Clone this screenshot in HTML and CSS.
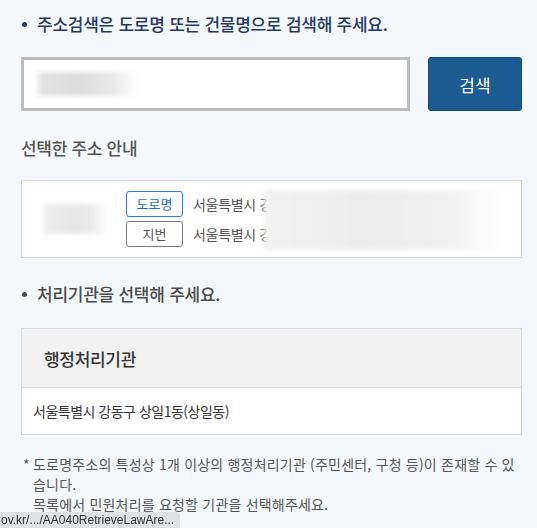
FILE: index.html
```html
<!DOCTYPE html>
<html lang="ko">
<head>
<meta charset="utf-8">
<title>주소검색</title>
<link rel="stylesheet" href="styles.css">
</head>
<body>
<div class="page">
  <p class="guide guide-blue">주소검색은 도로명 또는 건물명으로 검색해 주세요.</p>

  <div class="search-row">
    <div class="search-input"><span class="blur blur-input"></span></div>
    <button class="search-btn" type="button">검색</button>
  </div>

  <h3 class="section-title">선택한 주소 안내</h3>

  <div class="addr-box">
    <div class="addr-zip"><span class="blur blur-zip"></span></div>
    <div class="addr-lines">
      <div class="addr-line"><span class="badge badge-road">도로명</span><span class="addr-text">서울특별시 <span class="cut">강</span></span></div>
      <div class="addr-line"><span class="badge badge-jibun">지번</span><span class="addr-text">서울특별시 <span class="cut">강</span></span></div>
      <span class="blur blur-addr"></span>
    </div>
  </div>

  <p class="guide guide-gray">처리기관을 선택해 주세요.</p>

  <div class="org-table">
    <div class="org-head">행정처리기관</div>
    <div class="org-row">서울특별시 강동구 상일1동(상일동)</div>
  </div>

  <div class="note">
    <span class="note-star">*</span>
    <p class="note-text">도로명주소의 특성상 1개 이상의 행정처리기관 (주민센터, 구청 등)이 존재할 수 있습니다.<br>목록에서 민원처리를 요청할 기관을 선택해주세요.</p>
  </div>
</div>
<div class="status-bubble">ov.kr/.../AA040RetrieveLawAre...</div>
</body>
</html>
```

FILE: styles.css
```css
html, body {
  margin: 0;
  padding: 0;
  background: #f4f8fc;
  font-family: "Noto Sans CJK KR", "Noto Sans", sans-serif;
}

.page {
  padding: 13px 15px 0 21px;
  width: 501px;
}

.guide {
  position: relative;
  margin: 0;
  padding-left: 16px;
  font-size: 17px;
  line-height: 22px;
  font-weight: 500;
  letter-spacing: -0.25px;
}
.guide::before {
  content: "";
  position: absolute;
  left: 1px;
  top: 9px;
  width: 5px;
  height: 5px;
  border-radius: 50%;
  background: currentColor;
}
.guide-blue { color: #1f3a67; }
.guide-gray { color: #4a4a4a; margin-top: 25px; }

.search-row {
  display: flex;
  gap: 18px;
  margin-top: 22px;
  height: 54px;
}
.search-input {
  flex: 1;
  box-sizing: border-box;
  border: 3px solid #bcbcbc;
  background: #fff;
  display: flex;
  align-items: center;
  padding-left: 14px;
}
.search-btn {
  width: 94px;
  box-sizing: border-box;
  border: 1px solid #11487f;
  border-radius: 3px;
  background: #1c5a92;
  color: #fff;
  font-family: inherit;
  font-size: 17px;
  padding: 0;
  margin: 0;
}

.blur { display: block; filter: blur(2px); }
.blur-input {
  width: 100px;
  height: 24px;
  background: linear-gradient(90deg, #e4e4e4 0%, #dcdcdc 40%, #ececec 80%, rgba(255,255,255,0) 100%);
}

.section-title {
  margin: 25px 0 0;
  font-size: 17px;
  line-height: 24px;
  font-weight: 500;
  color: #555;
  letter-spacing: -0.3px;
}

.addr-box {
  margin-top: 20px;
  box-sizing: border-box;
  height: 78px;
  border: 1px solid #d5d8dc;
  background: #fff;
  display: flex;
  align-items: center;
  padding-left: 22px;
}
.addr-zip { width: 82px; }
.blur-zip {
  width: 64px;
  height: 30px;
  background: linear-gradient(90deg, #ececec 0%, #e6e6e6 50%, #eeeeee 80%, rgba(255,255,255,0) 100%);
}
.addr-lines {
  position: relative;
  display: flex;
  flex-direction: column;
  gap: 4px;
  flex: 1;
}
.addr-line {
  display: flex;
  align-items: center;
  gap: 10px;
}
.badge {
  box-sizing: border-box;
  width: 57px;
  height: 26px;
  border-radius: 3px;
  font-size: 13px;
  line-height: 24px;
  text-align: center;
  background: #fff;
}
.badge-road { border: 1px solid #1f84e6; color: #1a6fd0; }
.badge-jibun { border: 1px solid #777; color: #555; }
.addr-text {
  font-size: 14px;
  color: #555;
  letter-spacing: -0.3px;
}
.blur-addr {
  position: absolute;
  left: 138px;
  top: -1px;
  width: 238px;
  height: 60px;
  background: linear-gradient(90deg, #f2f2f2 0%, #ededed 40%, #f0f0f0 75%, rgba(255,255,255,0) 100%);
}

.org-table {
  margin-top: 23px;
  border: 1px solid #d5d8dc;
  background: #fff;
}
.org-head {
  height: 59px;
  box-sizing: border-box;
  background: #f2f2f2;
  border-bottom: 1px solid #dcdcdc;
  padding-left: 22px;
  display: flex;
  align-items: center;
  font-size: 17px;
  color: #333;
  font-weight: 500;
  letter-spacing: -0.3px;
}
.org-row {
  height: 46px;
  box-sizing: border-box;
  padding-left: 11px;
  display: flex;
  align-items: center;
  font-size: 14px;
  color: #333;
  letter-spacing: -0.5px;
}

.note {
  display: flex;
  margin-top: 19px;
  color: #555;
  font-size: 14px;
  line-height: 20px;
}
.note-star { width: 10px; flex: none; padding-left: 2px; }
.note-text { margin: 0; letter-spacing: 0.2px; }

.status-bubble {
  position: fixed;
  left: 0;
  bottom: 0;
  width: 179px;
  height: 16px;
  padding-left: 1px;
  background: #dfe1e5;
  border-top-right-radius: 4px;
  color: #333;
  font-family: "Liberation Sans", sans-serif;
  font-size: 12px;
  line-height: 17px;
  white-space: nowrap;
}
```
